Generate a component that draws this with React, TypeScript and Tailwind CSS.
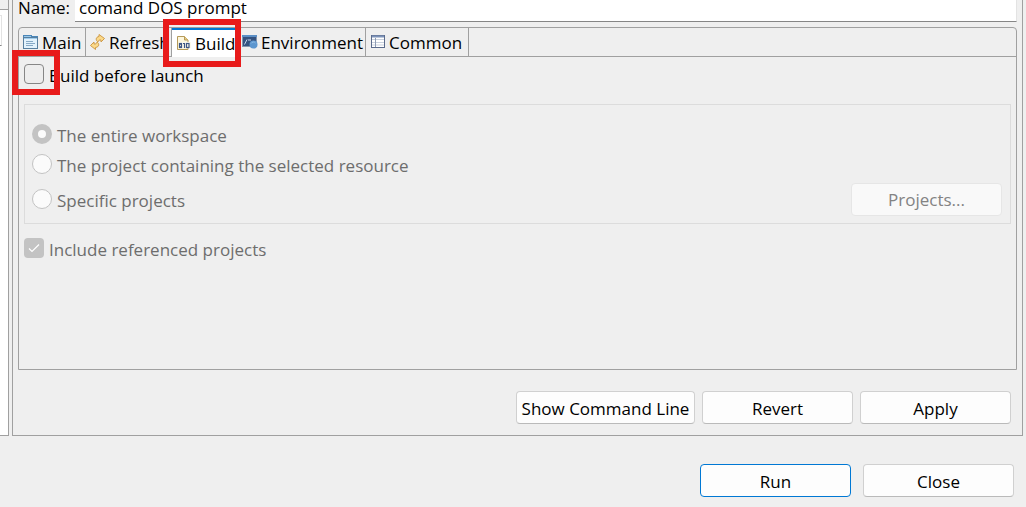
import { useState, type ReactNode } from "react";
import clsx from "clsx";

type TabId = "main" | "refresh" | "build" | "environment" | "common";

const scopes = [
  { value: "workspace", label: "The entire workspace" },
  { value: "containing", label: "The project containing the selected resource" },
];

function MainIcon() {
  return (
    <svg width="16" height="16" viewBox="0 0 16 16" aria-hidden="true">
      <path d="M0 1h9v1h6v2H0z" fill="#4a86b8" />
      <path d="M1 2.5h7" stroke="#9cc9e8" />
      <rect x="0.5" y="3.5" width="14" height="11" fill="#e3f2fc" stroke="#587f9f" />
      <path d="M1 4.5h13" stroke="#9fcdee" />
      <path d="M3 7.5h7M3 9.5h9M3 11.5h7" stroke="#86a9c6" />
    </svg>
  );
}

function RefreshIcon() {
  return (
    <svg width="16" height="16" viewBox="0 0 16 16" aria-hidden="true">
      <g fill="#fbd98a" stroke="#cf9b48" strokeLinejoin="round">
        <path d="M9 .5L14.500 4.500 11 8V6C9 5.800 8.300 6.500 8 8 5.500 6.500 5.500 3 9 2.500z" />
        <path d="M5.500 15.500L.5 11.500 4 8v2c2 .2 2.700-.5 3-2 2.500 1.500 2.500 5-1.500 5.500z" />
      </g>
    </svg>
  );
}

function BuildIcon() {
  return (
    <svg width="16" height="16" viewBox="0 0 16 16" aria-hidden="true">
      <path d="M1.500 1.500h7l3.500 3.500v9.500h-10.500z" fill="#fdf6dc" stroke="#b59a5a" />
      <path d="M8.500 1.500V5H12" fill="#eacb82" stroke="#b59a5a" />
      <path d="M3 7h12v6H3z" fill="#fdf9ea" />
      <rect x="3.500" y="8.500" width="2" height="4" fill="none" stroke="#3d5684" strokeWidth="1.200" />
      <path d="M7 8.500h1.500V13" fill="none" stroke="#3d5684" strokeWidth="1.200" />
      <rect x="10.500" y="8.500" width="2.500" height="4" fill="none" stroke="#3d5684" strokeWidth="1.200" />
    </svg>
  );
}

function EnvironmentIcon() {
  return (
    <svg width="16" height="16" viewBox="0 0 16 16" aria-hidden="true">
      <rect x="0.500" y="1.500" width="14" height="11" fill="#34527f" stroke="#8595ad" />
      <path d="M0 2h15" stroke="#5b8fc6" strokeWidth="2" />
      <path d="M2.500 10.500l2.500-5M6 6h3" stroke="#c4d5ec" fill="none" />
      <circle cx="11.500" cy="10.500" r="4" fill="#5c96cf" />
      <path d="M9 9.500c1-1.800 3.500-2 4.500-.5" stroke="#8dbbe4" fill="none" />
    </svg>
  );
}

function CommonIcon() {
  return (
    <svg width="16" height="16" viewBox="0 0 16 16" aria-hidden="true">
      <rect x="1.500" y="1.500" width="13" height="12" fill="#fff" stroke="#5c6c8c" />
      <path d="M2 2.500h12" stroke="#7c92b8" strokeWidth="2" />
      <path d="M2 5.500h12M2 8.500h12M2 11h12" stroke="#c9d1dd" />
      <path d="M5.500 4v9" stroke="#8f9db5" />
    </svg>
  );
}

const tabs: { id: TabId; label: string; icon: ReactNode; width: string }[] = [
  { id: "main", label: "Main", icon: <MainIcon />, width: "w-[67px]" },
  { id: "refresh", label: "Refresh", icon: <RefreshIcon />, width: "w-[85px]" },
  { id: "build", label: "Build", icon: <BuildIcon />, width: "w-[67px]" },
  { id: "environment", label: "Environment", icon: <EnvironmentIcon />, width: "w-[128px]" },
  { id: "common", label: "Common", icon: <CommonIcon />, width: "w-[103px]" },
];

function Button({
  children,
  primary,
  disabled,
  className = "w-[151px]",
}: {
  children: ReactNode;
  primary?: boolean;
  disabled?: boolean;
  className?: string;
}) {
  return (
    <button
      type="button"
      disabled={disabled}
      className={clsx(
        "flex h-[33px] shrink-0 items-center justify-center whitespace-nowrap rounded border pt-0.5",
        disabled
          ? "border-[#e6e6e6] bg-[#f9f9f9] text-[#838383]"
          : "bg-[#fdfdfd] text-black",
        !disabled && (primary ? "border-[#0078d4]" : "border-[#d0d0d0] border-b-[#bababa]"),
        className,
      )}
    >
      {children}
    </button>
  );
}

function Radio({
  value,
  label,
  scope,
  onChange,
}: {
  value: string;
  label: string;
  scope: string;
  onChange: (value: string) => void;
}) {
  return (
    <label className="flex items-center gap-[5px]">
      <input
        type="radio"
        name="scope"
        value={value}
        checked={scope === value}
        onChange={() => onChange(value)}
        disabled
        className="size-5 shrink-0 appearance-none rounded-full border border-[#c3c3c3] bg-[#fbfbfb] checked:border-[6px]"
      />
      <span className="pt-1">{label}</span>
    </label>
  );
}

// red frame around a control the reader should look at
function Highlight({ className }: { className: string }) {
  return (
    <span
      aria-hidden="true"
      className={clsx("pointer-events-none absolute z-10 border-6 border-[#e81b1b]", className)}
    />
  );
}

export default function App() {
  const [name, setName] = useState("comand DOS prompt");
  const [active, setActive] = useState<TabId>("build");
  const [build, setBuild] = useState(false);
  const [scope, setScope] = useState("workspace");

  return (
    <div className="min-h-screen bg-[#efefef] font-['Open_Sans','Noto_Sans',sans-serif] text-[17px] leading-5 text-black">
      <div className="flex gap-[3px]">
        <aside className="flex w-[9px] shrink-0 flex-col border-r border-b border-[#a0a0a0] bg-white">
          <div className="h-2.5 border-b border-[#a0a0a0] bg-[#efefef]" />
          <div className="mt-[5px] h-[31px] w-0.5 border-t border-r border-b border-[#e3e3e3] border-b-[#868686]" />
        </aside>

        <main className="mr-[3px] min-w-0 flex-1 border-r border-b border-l border-[#a0a0a0] px-[5px] pb-[11px]">
          <div className="flex h-[22px] items-start gap-1.5">
            <label htmlFor="name" className="w-[51px] shrink-0 leading-4">
              Name:
            </label>
            <input
              id="name"
              value={name}
              onChange={(e) => setName(e.target.value)}
              className="h-full min-w-0 flex-1 border-r border-b border-r-[#e3e3e3] border-b-[#868686] bg-white px-1 pb-1.5 leading-4 outline-none"
            />
          </div>

          <div className="mt-[5px] rounded-t border border-[#a0a0a0]">
            <div role="tablist" className="flex h-[29px] border-b border-[#a0a0a0]">
              {tabs.map((t) => (
                <button
                  key={t.id}
                  type="button"
                  role="tab"
                  aria-selected={active === t.id}
                  onClick={() => setActive(t.id)}
                  className={clsx(
                    "relative flex shrink-0 items-center gap-[3px] whitespace-nowrap border-[#a0a0a0] pl-1",
                    t.width,
                    t.id !== "refresh" && t.id !== "build" && "border-r",
                    active === t.id && "-mb-px border-l bg-white shadow-[inset_0_2px_0_#0078d4]",
                  )}
                >
                  {t.icon}
                  <span className="pt-0.5">{t.label}</span>
                  {t.id === "build" && <Highlight className="-top-[9px] -left-[9px] h-12 w-[78px]" />}
                </button>
              ))}
            </div>

            <div className="min-h-[312px] px-[5px] pt-[5px]">
              <label className="relative flex w-fit items-center gap-[5px]">
                <input
                  type="checkbox"
                  checked={build}
                  onChange={(e) => setBuild(e.target.checked)}
                  className="size-5 appearance-none rounded border border-[#868686] bg-[#ededed] checked:bg-[#0078d4]"
                />
                <span className="pt-1">Build before launch</span>
                <Highlight className="-top-3 -left-3 h-[45px] w-12" />
              </label>

              <fieldset className="mt-[18px] border border-[#dcdcdc] pt-3.5 pr-2 pb-1 pl-[7px] text-[#6d6d6d]">
                {scopes.map((s) => (
                  <div key={s.value} className="flex h-[30px] items-center">
                    <Radio {...s} scope={scope} onChange={setScope} />
                  </div>
                ))}
                <div className="flex h-10 items-center justify-between">
                  <Radio
                    value="specific"
                    label="Specific projects"
                    scope={scope}
                    onChange={setScope}
                  />
                  <Button disabled>Projects...</Button>
                </div>
              </fieldset>

              <label className="relative mt-3 flex w-fit items-center gap-[5px] text-[#6d6d6d]">
                <input
                  type="checkbox"
                  defaultChecked
                  disabled
                  className="size-5 appearance-none rounded bg-[#c3c3c3]"
                />
                <svg
                  width="20"
                  height="20"
                  viewBox="0 0 20 20"
                  className="absolute top-0.5 left-0"
                  aria-hidden="true"
                >
                  <path d="M5 10.500l3 3 7-7" fill="none" stroke="#fff" strokeWidth="1.200" />
                </svg>
                <span className="pt-1">Include referenced projects</span>
              </label>
            </div>
          </div>

          <div className="mt-[21px] flex justify-end gap-[7px] pr-1.5">
            <Button className="w-[179px]">Show Command Line</Button>
            <Button>Revert</Button>
            <Button>Apply</Button>
          </div>
        </main>
      </div>

      <footer className="flex justify-end gap-3 pt-7 pr-3 pb-2.5">
        <Button primary>Run</Button>
        <Button>Close</Button>
      </footer>
    </div>
  );
}
